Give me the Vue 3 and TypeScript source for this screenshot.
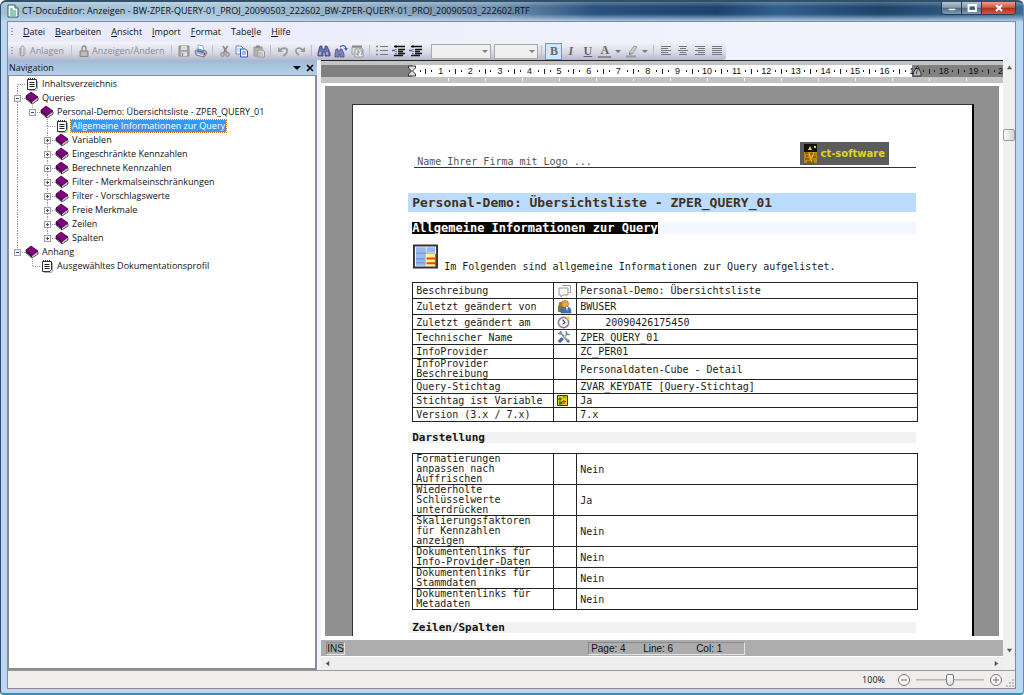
<script setup lang="ts">
import { ref } from 'vue'

type Kind = 'book' | 'page'
interface Row {
  label: string
  kind: Kind
  cells: string[]
  selected?: boolean
}

// Guide cells: t = line up, b = line down, r = line right, + / - = expander
const rows: Row[] = [
  { label: 'Inhaltsverzeichnis', kind: 'page', cells: ['br'] },
  { label: 'Queries', kind: 'book', cells: ['tbr-'] },
  { label: 'Personal-Demo: Übersichtsliste - ZPER_QUERY_01', kind: 'book', cells: ['tb', 'tr-'] },
  { label: 'Allgemeine Informationen zur Query', kind: 'page', cells: ['tb', '', 'tbr'], selected: true },
  { label: 'Variablen', kind: 'book', cells: ['tb', '', 'tbr+'] },
  { label: 'Eingeschränkte Kennzahlen', kind: 'book', cells: ['tb', '', 'tbr+'] },
  { label: 'Berechnete Kennzahlen', kind: 'book', cells: ['tb', '', 'tbr+'] },
  { label: 'Filter - Merkmalseinschränkungen', kind: 'book', cells: ['tb', '', 'tbr+'] },
  { label: 'Filter - Vorschlagswerte', kind: 'book', cells: ['tb', '', 'tbr+'] },
  { label: 'Freie Merkmale', kind: 'book', cells: ['tb', '', 'tbr+'] },
  { label: 'Zeilen', kind: 'book', cells: ['tb', '', 'tbr+'] },
  { label: 'Spalten', kind: 'book', cells: ['tb', '', 'tr+'] },
  { label: 'Anhang', kind: 'book', cells: ['tr-'] },
  { label: 'Ausgewähltes Dokumentationsprofil', kind: 'page', cells: ['', 'tr'] },
]

const menus = [
  ['', 'D', 'atei'],
  ['', 'B', 'earbeiten'],
  ['', 'A', 'nsicht'],
  ['', 'I', 'mport'],
  ['', 'F', 'ormat'],
  ['Tabe', 'l', 'le'],
  ['', 'H', 'ilfe'],
]

const info = [
  { name: 'Beschreibung', icon: 'note', value: 'Personal-Demo: Übersichtsliste' },
  { name: 'Zuletzt geändert von', icon: 'users', value: 'BWUSER' },
  { name: 'Zuletzt geändert am', icon: 'clock', value: '20090426175450', indent: true },
  { name: 'Technischer Name', icon: 'tools', value: 'ZPER_QUERY_01' },
  { name: 'InfoProvider', icon: '', value: 'ZC_PER01' },
  { name: 'InfoProvider Beschreibung', icon: '', value: 'Personaldaten-Cube - Detail', multi: true },
  { name: 'Query-Stichtag', icon: '', value: 'ZVAR_KEYDATE [Query-Stichtag]' },
  { name: 'Stichtag ist Variable', icon: 'variable', value: 'Ja' },
  { name: 'Version (3.x / 7.x)', icon: '', value: '7.x' },
]

const display = [
  { name: 'Formatierungen anpassen nach Auffrischen', value: 'Nein' },
  { name: 'Wiederholte Schlüsselwerte unterdrücken', value: 'Ja' },
  { name: 'Skalierungsfaktoren für Kennzahlen anzeigen', value: 'Nein' },
  { name: 'Dokumentenlinks für Info-Provider-Daten', value: 'Nein' },
  { name: 'Dokumentenlinks für Stammdaten', value: 'Nein' },
  { name: 'Dokumentenlinks für Metadaten', value: 'Nein' },
]

const zoom = ref(50)
</script>

<template>
  <div class="window">
    <header class="titlebar">
      <svg class="app-icon" viewBox="0 0 12 14"><path d="M1 1h7l3 3v9H1z" fill="#fff" stroke="#24605c" /><path d="M8 1v3h3" fill="#cde" stroke="#24605c" /><path d="M3 5h3M3 7h6M3 9h6M3 11h6" stroke="#2f8a80" /></svg>
      <h1>CT-DocuEditor: Anzeigen - BW-ZPER-QUERY-01_PROJ_20090503_222602_BW-ZPER-QUERY-01_PROJ_20090503_222602.RTF</h1>
      <div class="winbtns">
        <button type="button" aria-label="Minimieren"><svg viewBox="0 0 12 10"><path d="M2.500 5.500h7v2h-7z" fill="#fff" stroke="#566" stroke-width=".5" /></svg></button>
        <button type="button" aria-label="Maximieren"><svg viewBox="0 0 12 10"><path d="M2.500 2h7.500v6H2.500z" fill="none" stroke="#fff" stroke-width="1.800" /><path d="M4.500 4h3.500v2H4.500z" fill="#357" /></svg></button>
        <button type="button" class="close" aria-label="Schließen"><svg viewBox="0 0 12 10"><path d="M3 2l6 6M9 2l-6 6" stroke="#fff" stroke-width="2.200" /></svg></button>
      </div>
    </header>

    <div class="client">
      <nav class="menubar">
        <span class="grip"></span>
        <button v-for="m in menus" :key="m.join('')" type="button">{{ m[0] }}<u>{{ m[1] }}</u>{{ m[2] }}</button>
      </nav>

      <div class="toolbar">
        <span class="grip"></span>
        <button type="button" class="wide"><svg class="narrow" viewBox="0 0 10 14"><path d="M3 4v6a2 2 0 0 0 4 0V3.500a1.500 1.500 0 0 0-3 0V10" fill="none" stroke="#999" /><path d="M8 4v7" stroke="#bbb" /></svg>Anlagen</button>
        <i class="sep"></i>
        <button type="button" class="wide"><svg class="narrow" viewBox="0 0 10 14"><path d="M3 7V4.500a2 2.500 0 0 1 4 0V7" fill="none" stroke="#888" stroke-width="1.300" /><path d="M1 7h8v5.500H1z" fill="#aaa" stroke="#888" /><path d="M2 9h6M2 11h6" stroke="#ccc" /></svg>Anzeigen/Ändern</button>
        <i class="sep"></i>
        <button type="button" aria-label="Speichern"><svg viewBox="0 0 14 14"><path d="M2 2h10v10H2z" fill="#a5a5a5" stroke="#8b8b8b" /><path d="M4 2h6v4H4zM4 8h6v4H4z" fill="#ddd" /><path d="M5.500 9v3" stroke="#777" /></svg></button>
        <button type="button" aria-label="Drucken"><svg viewBox="0 0 14 14"><path d="M4 1l5 1 1 5H4z" fill="#fff" stroke="#7b8fb5" stroke-width=".7" /><path d="M1 7l3-2 8 2 1 2-3 4-8-2z" fill="#a9aebc" stroke="#666f85" stroke-width=".8" /><path d="M4 6l6 1.500-1 1.500-6-1.500z" fill="#3b74cf" /><path d="M3 10l6 1.500" stroke="#eee" /><circle cx="10.500" cy="10" r=".9" fill="#d33" /></svg></button>
        <i class="sep"></i>
        <button type="button" aria-label="Ausschneiden"><svg viewBox="0 0 14 14"><path d="M5 2l4 7M9.500 2l-4 7" stroke="#888" stroke-width="1.600" /><circle cx="4.500" cy="10.500" r="1.700" fill="none" stroke="#999" stroke-width="1.500" /><circle cx="9.500" cy="10.500" r="1.700" fill="none" stroke="#999" stroke-width="1.500" /></svg></button>
        <button type="button" aria-label="Kopieren"><svg viewBox="0 0 14 14"><path d="M1 2h5l2 2v6H1z" fill="#fff" stroke="#6685cf" /><path d="M2 5h4M2 7h4" stroke="#98b0e8" /><path d="M5.500 5h5l2 2v6h-7z" fill="#eef3ff" stroke="#3559b8" /><path d="M7 8h4M7 10h4" stroke="#5b80dd" /></svg></button>
        <button type="button" aria-label="Einfügen"><svg viewBox="0 0 14 14"><path d="M2 3h8v9H2z" fill="#b3b3b3" stroke="#929292" /><path d="M4 1.500h4v2H4z" fill="#8c8c8c" /><path d="M6 6h5l1.500 1.500V13H6z" fill="#ddd" stroke="#999" /><path d="M7 9h4M7 11h4" stroke="#aaa" /></svg></button>
        <i class="sep"></i>
        <button type="button" aria-label="Rückgängig"><svg viewBox="0 0 14 14"><path d="M4 6c3-3 8-2 7 1 0 2-2 4-4 5" fill="none" stroke="#999" stroke-width="1.800" /><path d="M2 3v5h5z" fill="#999" /></svg></button>
        <button type="button" aria-label="Wiederholen"><svg viewBox="0 0 14 14"><path d="M10 6C7 3 2 4 3 7c0 2 1 3 3 4" fill="none" stroke="#999" stroke-width="1.600" /><path d="M12 3v5H7z" fill="#999" /></svg></button>
        <i class="sep"></i>
        <button type="button" aria-label="Suchen"><svg viewBox="0 0 14 14"><path d="M3 2h2v3h3V2h2l3 7v3H8V8H6v4H1V9z" fill="#6b73ac" stroke="#363d79" stroke-width=".8" /><path d="M3 8v3M10 8v3" stroke="#dde" /></svg></button>
        <button type="button" aria-label="Ersetzen"><svg viewBox="0 0 14 14"><path d="M2 5h2v2h2V5h2l2 5v3H6v-3H5v3H1v-3z" fill="#7f85b4" stroke="#41477f" stroke-width=".7" /><path d="M6 3c2-2 5-2 6 1" fill="none" stroke="#3069d8" stroke-width="1.300" /><path d="M10 4h4l-2 3z" fill="#3069d8" /></svg></button>
        <button type="button" aria-label="Gehe zu"><svg viewBox="0 0 14 14"><path d="M1 3h9v7H1z" fill="#e0e0e0" stroke="#999" /><path d="M1 2.500h10" stroke="#888" stroke-width="2" /><path d="M4 5h8v8H4z" fill="#ececec" stroke="#999" /><path d="M6 7h2v2H6v2h2M9.500 7h2l-1 4" fill="none" stroke="#888" /></svg></button>
        <i class="sep"></i>
        <button type="button" aria-label="Aufzählung"><svg viewBox="0 0 14 14"><path d="M5 2.500h8M5 6.500h8M5 10.500h8" stroke="#777" /><path d="M1 2.500h2M1 6.500h2M1 10.500h2" stroke="#888" stroke-width="1.500" /></svg></button>
        <button type="button" aria-label="Einzug vergrößern"><svg viewBox="0 0 14 14"><path d="M2 2.500h11M6 5.500h7M6 7.500h5M2 11.500h9M6 9.500h7" stroke="#111" stroke-width="1.300" /><path d="M4 1v12" stroke="#222" stroke-dasharray="1 1" /><path d="M0 6.500h3" stroke="#3a55c5" stroke-width="1.500" /></svg></button>
        <button type="button" aria-label="Einzug verkleinern"><svg viewBox="0 0 14 14"><path d="M2 2.500h11M6 5.500h7M6 7.500h5M2 11.500h9M6 9.500h7" stroke="#111" stroke-width="1.300" /><path d="M4 1v12" stroke="#222" stroke-dasharray="1 1" /><path d="M0 6.500h3" stroke="#3a55c5" stroke-width="1.500" /></svg></button>
        <i class="sep blank"></i>
        <span class="combo font"><select aria-label="Schriftart"><option></option></select></span>
        <span class="combo size"><select aria-label="Schriftgröße"><option></option></select></span>
        <i class="sep"></i>
        <button type="button" class="letter active"><b>B</b></button>
        <button type="button" class="letter"><em>I</em></button>
        <button type="button" class="letter"><u>U</u></button>
        <button type="button" class="letter color">A</button>
        <button type="button" class="drop" aria-label="Schriftfarbe wählen"></button>
        <button type="button" aria-label="Hervorheben"><svg viewBox="0 0 14 14"><path d="M4 9l5-7 3 1-5 7z" fill="#ccc" stroke="#999" /><path d="M4 9l3 1-3 1z" fill="#777" /><path d="M1 12.500h10" stroke="#999" stroke-width="2" /></svg></button>
        <button type="button" class="drop" aria-label="Hervorhebungsfarbe wählen"></button>
        <i class="sep"></i>
        <button type="button" aria-label="Linksbündig"><svg viewBox="0 0 14 14"><path d="M2 2.500h10M2 4.500h7M2 6.500h10M2 8.500h7M2 10.500h10" stroke="#777" /></svg></button>
        <button type="button" aria-label="Zentriert"><svg viewBox="0 0 14 14"><path d="M3 2.500h8M4 4.500h6M2 6.500h10M4 8.500h6M3 10.500h8" stroke="#777" /></svg></button>
        <button type="button" aria-label="Rechtsbündig"><svg viewBox="0 0 14 14"><path d="M2 2.500h10M5 4.500h7M2 6.500h10M5 8.500h7M2 10.500h10" stroke="#777" /></svg></button>
        <button type="button" aria-label="Blocksatz"><svg viewBox="0 0 14 14"><path d="M2 2.500h10M2 4.500h10M2 6.500h10M2 8.500h10M2 10.500h10" stroke="#777" /></svg></button>
      </div>

      <div class="main">
        <aside class="nav">
          <div class="nav-head">
            <h2>Navigation</h2>
            <button type="button" aria-label="Optionen"><svg viewBox="0 0 12 12"><path d="M2 4h8l-4 4z" /></svg></button>
            <button type="button" aria-label="Navigation schließen"><svg viewBox="0 0 12 12"><path d="M3 3l6 6M9 3l-6 6" stroke="#000" stroke-width="1.600" /></svg></button>
          </div>
          <ul class="tree">
            <li v-for="r in rows" :key="r.label">
              <svg v-for="(c, i) in r.cells" :key="i" class="guide" viewBox="0 0 15 14">
                <g stroke="#9a9a9a" stroke-dasharray="1 1">
                  <path v-if="c.includes('t')" d="M7.500 0v7" />
                  <path v-if="c.includes('b')" d="M7.500 7v7" />
                  <path v-if="c.includes('r')" d="M8 7.500h7" />
                </g>
                <g v-if="/[+-]/.test(c)">
                  <rect x="4.500" y="4.500" width="6" height="6" fill="#f4f4f4" stroke="#a0a0a0" />
                  <path d="M6 7.500h3" stroke="#3a4f9c" />
                  <path v-if="c.includes('+')" d="M7.500 6v3" stroke="#3a4f9c" />
                </g>
              </svg>
              <svg v-if="r.kind === 'book'" class="node" viewBox="0 0 14 14">
                <path d="M1 5v3l6 5 6-4V7z" fill="#fff" stroke="#222" stroke-width=".8" />
                <path d="M7 11l6-4M7 12l6-4" stroke="#888" stroke-width=".6" />
                <path d="M1 5v2.500l6 5V10z" fill="#4d004d" />
                <path d="M1 5l5-4 7 5-6 4.500z" fill="#800080" stroke="#3d003d" stroke-width=".8" />
              </svg>
              <svg v-else class="node" viewBox="0 0 14 14">
                <path d="M2.500 2.500h9v8l-1.500 2H2.500z" fill="#fff" stroke="#333" />
                <path d="M3.500 1v2M5.500 1v2M7.500 1v2M9.500 1v2" stroke="#333" />
                <path d="M4.500 5.500h5M4.500 7.500h5M4.500 9.500h5" stroke="#222" />
                <path d="M12.500 4v8l-1 1.500H4" fill="none" stroke="#888" stroke-width=".7" />
              </svg>
              <a href="#" :class="{ selected: r.selected }">{{ r.label }}</a>
            </li>
          </ul>
        </aside>

        <section class="editor">
          <div class="workspace">
            <div class="ruler">
              <div class="scale">
                <svg class="tab" viewBox="0 0 10 12"><path d="M1.500 1h7v2L5.500 6l3 3v2h-7V9l3-3-3-3z" fill="#ddd" stroke="#333" /></svg>
                <div class="units">
                  <div v-for="n in 20" :key="n"><i></i><i class="half"></i><i></i><span>{{ n }}</span></div>
                </div>
                <div class="margin-zone"><svg viewBox="0 0 10 12"><path d="M5.500 1L9 8v3H1V8z" fill="#bbb" stroke="#333" /></svg></div>
              </div>
              <div class="stops"></div>
            </div>
            <div class="canvas">
              <article class="page">
                <header class="letterhead">
                  <p>Name Ihrer Firma mit Logo ...</p>
                  <div class="logo">
                    <svg viewBox="0 0 13 19"><path d="M0 0h13v19H0z" fill="#111" /><path d="M0 8h13v11H0z" fill="#b98912" /><path d="M4 6l2-4 2 4zM10 2h2v2h-2z" fill="#e5da2a" /><path d="M1 9h3M6 10h5M2 12h2M8 13h4M1 15h4M7 16h2M3 18h7" stroke="#5d3a08" /><path d="M5 9l3 9M10 8l-2 6" stroke="#efc12f" /></svg>
                    <span>ct-software</span>
                  </div>
                </header>
                <h2 class="title">Personal-Demo: Übersichtsliste - ZPER_QUERY_01</h2>
                <h3 class="subtitle"><mark>Allgemeine Informationen zur Query</mark></h3>
                <div class="intro">
                  <svg viewBox="0 0 26 25"><path d="M1 1h24v23H1z" fill="#fff" stroke="#333" stroke-width="2" /><path d="M3 3h9v19H3zM14 3h9v5h-9z" fill="#8fbcf5" /><path d="M3 9h20M3 15h9M3 19h9M12.500 3v19" stroke="#7986bb" /><path d="M14 10h9v12h-9z" fill="#fff27d" /><path d="M14 14.500h9M14 19.500h9" stroke="#ff3d16" stroke-width="2" /><path d="M23.500 10v13" stroke="#7a5418" /></svg>
                  <p>Im Folgenden sind allgemeine Informationen zur Query aufgelistet.</p>
                </div>
                <table>
                  <colgroup><col class="c1" /><col class="c2" /><col /></colgroup>
                  <tbody>
                    <tr v-for="r in info" :key="r.name">
                      <th scope="row" :class="{ multi: r.multi }">{{ r.name }}</th>
                      <td class="ic">
                        <svg v-if="r.icon === 'note'" class="big" viewBox="0 0 15 15"><path d="M5 2.500h8.500v7H12" fill="#fff" stroke="#999" /><path d="M2 5h9v7H6l-2 2v-2H2z" fill="#fafafa" stroke="#999" /></svg>
                        <svg v-else-if="r.icon === 'users'" class="big" viewBox="0 0 15 15"><path d="M1 7l2-3 4 2v7H1z" fill="#61883f" /><circle cx="4" cy="5" r="2.300" fill="#b27325" /><path d="M4 13c0-5 2-5 5-5s5 0 5 6H4z" fill="#496fad" stroke="#35558d" stroke-width=".6" /><circle cx="8" cy="5" r="3.500" fill="#e9a548" stroke="#a9651c" stroke-width=".7" /><path d="M9 8l1 4 1-4z" fill="#fff" /></svg>
                        <svg v-else-if="r.icon === 'clock'" viewBox="0 0 15 15"><circle cx="7" cy="8" r="5.500" fill="#fafafa" stroke="#8f7da6" stroke-width="1.700" /><path d="M6 5l2.500 3L6 10" fill="none" stroke="#333" stroke-width="1.200" /><path d="M12 0l1 2.500 2 .5-2 1-1 2-1-2-2-1 2-.5z" fill="#f4d638" /></svg>
                        <svg v-else-if="r.icon === 'tools'" viewBox="0 0 15 15"><path d="M3 2l8 9" stroke="#78909c" stroke-width="2" /><path d="M11 11l2 2" stroke="#5c7694" stroke-width="3" /><path d="M12 3L4 11" stroke="#a9b6c4" stroke-width="1.600" /><path d="M6 9l-4 4" stroke="#3d6aab" stroke-width="3.500" /><path d="M10 1v4h4M1 4h3V1" fill="none" stroke="#78909c" stroke-width="1.500" /></svg>
                        <svg v-else-if="r.icon === 'variable'" class="small" viewBox="0 0 11 11"><path d="M.5.5h10v10H.500z" fill="#e5cf17" stroke="#333" /><path d="M2 3h2v2H2zM6 2h3M2 7h3v2H2" fill="#4b6b13" stroke="#4b6b13" /><path d="M7 5v4M5 6.500h4" stroke="#c22" /></svg>
                      </td>
                      <td><span :class="{ indent: r.indent }">{{ r.value }}</span></td>
                    </tr>
                  </tbody>
                </table>
                <h4>Darstellung</h4>
                <table>
                  <colgroup><col class="c1" /><col class="c2" /><col /></colgroup>
                  <tbody>
                    <tr v-for="r in display" :key="r.name">
                      <th scope="row" class="multi">{{ r.name }}</th>
                      <td class="ic"></td>
                      <td>{{ r.value }}</td>
                    </tr>
                  </tbody>
                </table>
                <h4>Zeilen/Spalten</h4>
              </article>
            </div>
            <div class="infobar">
              <span class="ins">INS</span>
              <div class="pos"><span>Page: 4</span><span>Line: 6</span><span>Col: 1</span></div>
            </div>
            <div class="hscroll">
              <button type="button" aria-label="Nach links"><svg viewBox="0 0 8 8"><path d="M6 1v6L2 4z" /></svg></button>
              <button type="button" aria-label="Nach rechts"><svg viewBox="0 0 8 8"><path d="M2 1v6l4-3z" /></svg></button>
            </div>
          </div>
          <div class="vscroll">
            <button type="button" aria-label="Nach oben"><svg viewBox="0 0 8 8"><path d="M1 6h6L4 2z" /></svg></button>
            <div class="track"><span class="before"></span><span class="thumb"></span><span class="after"></span></div>
            <button type="button" aria-label="Nach unten"><svg viewBox="0 0 8 8"><path d="M1 2h6L4 6z" /></svg></button>
          </div>
        </section>
      </div>

      <footer class="status">
        <label for="zoom">100%</label>
        <button type="button" aria-label="Verkleinern"><svg viewBox="0 0 14 14"><circle cx="7" cy="7" r="5.500" fill="#f6f4f4" stroke="#777" /><path d="M4 7h6" stroke="#777" /></svg></button>
        <input id="zoom" v-model="zoom" type="range" min="0" max="100" />
        <button type="button" aria-label="Vergrößern"><svg viewBox="0 0 14 14"><circle cx="7" cy="7" r="5.500" fill="#f6f4f4" stroke="#777" /><path d="M4 7h6M7 4v6" stroke="#777" /></svg></button>
        <svg class="resize" viewBox="0 0 10 10"><path d="M7 1h2v2H7zM4 4h2v2H4zM7 4h2v2H7zM1 7h2v2H1zM4 7h2v2H4zM7 7h2v2H7z" fill="#c3bfbf" /></svg>
      </footer>
    </div>
  </div>
</template>

<style>
body { background: #fff; }
</style>

<style scoped>
* { box-sizing: border-box; }
h1, h2, h3, h4, p, ul { margin: 0; padding: 0; font-weight: normal; }
button { border: 0; padding: 0; margin: 0; background: none; font: inherit; color: inherit; }
svg { display: block; flex: none; }
a { color: inherit; text-decoration: none; }

.window {
  height: 100vh;
  display: flex;
  flex-direction: column;
  padding: 0 7px 4px 6px;
  border: 1px solid #31506a;
  border-top-width: 2px;
  border-right-color: #17a9cf;
  border-bottom: 2px solid #2f90b0;
  border-radius: 6px 6px 4px 4px;
  background:
    linear-gradient(180deg, rgba(255, 255, 255, .25) 0, rgba(255, 255, 255, 0) 5px, rgba(255, 255, 255, 0) 12px, #bdd7f3 20px) 0 0 / 100% 21px no-repeat,
    linear-gradient(90deg, #a3bfd5 0, #a9c6da 20%, #8eabc4 36%, #7594b2 48%, #29527d 58%, #1c436c 70%, #315f8b 76%, #1d4369 86%, #406b91 100%) 0 0 / 100% 21px no-repeat,
    #bdd7f3;
  font-family: "Open Sans", "Noto Sans", sans-serif;
  font-size: 9px;
  line-height: 12px;
  color: #111;
}
.titlebar { display: flex; height: 19px; align-items: flex-start; }
.app-icon { width: 12px; height: 14px; margin-top: 2px; }
.titlebar h1 { flex: 1; margin-left: 3px; font-size: 9px; line-height: 17px; white-space: nowrap; overflow: hidden; }
.winbtns { display: flex; border: 1px solid #263f58; border-top: 0; border-radius: 0 0 4px 4px; overflow: hidden; }
.winbtns button { width: 20px; height: 12px; display: grid; place-items: center; border-right: 1px solid #263f58; background: linear-gradient(#b5c3d1, #8498ab 45%, #506a83 50%, #7f9bb3); }
.winbtns button.close { width: 33px; border-right: 0; background: linear-gradient(#e3a18d, #cd5941 45%, #b62d12 50%, #d6593b); }
.winbtns svg { width: 12px; height: 10px; }

.client { flex: 1; min-height: 0; display: flex; flex-direction: column; border: 1px solid #838c96; background: #f0f3fd; }
.menubar { height: 20px; flex: none; display: flex; align-items: center; padding-left: 3px; gap: 10px; background: linear-gradient(90deg, #e9eafa, #f1f4fd 80%); }
.grip { width: 2px; height: 9px; flex: none; background: repeating-linear-gradient(#9a9aae 0 1px, transparent 1px 3px); }
.toolbar { height: 18px; flex: none; align-self: flex-start; display: flex; align-items: center; padding: 0 1px 0 3px; border-radius: 0 3px 3px 0; background: linear-gradient(#f4f4fb, #d8d8e6 60%, #b7b7cd); color: #8b8b8b; }
.toolbar button { width: 17px; height: 17px; flex: none; display: grid; place-items: center; }
.toolbar svg { width: 14px; height: 14px; }
.toolbar svg.narrow { width: 10px; }
.toolbar button.wide { width: auto; display: flex; align-items: center; gap: 3px; padding: 0 4px; }
.sep { width: 7px; height: 12px; flex: none; background: linear-gradient(#bcbccb, #bcbccb) 3px 0 / 1px 100% no-repeat; }
.sep.blank { background: none; }
.combo { height: 15px; flex: none; display: flex; position: relative; margin-right: 3px; }
.combo select { width: 100%; appearance: none; border: 1px solid #a9a9a9; border-radius: 0; background: #f0f0f0; font-size: 9px; padding: 0; }
.combo::after { content: ""; position: absolute; right: 3px; top: 6px; border: 3px solid transparent; border-top-color: #808080; border-bottom: 0; pointer-events: none; }
.combo.font { width: 60px; }
.combo.size { width: 44px; margin-right: 0; }
.toolbar button.letter { font-family: "Liberation Serif", serif; font-size: 12px; line-height: 13px; font-weight: bold; color: #666; }
.toolbar button.active { background: #cfe6fb; border: 1px solid #4aa3e8; }
.toolbar button.color { height: 13px; width: 13px; margin: 0 2px; line-height: 10px; border-bottom: 2px solid #8b8b8b; }
.toolbar button.drop { width: 10px; }
.drop::after { content: ""; border: 3px solid transparent; border-top-color: #777; border-bottom: 0; }

.main { flex: 1; min-height: 0; display: flex; gap: 4px; }
.nav { width: 30.7%; display: flex; flex-direction: column; }
.nav-head { height: 15px; flex: none; display: flex; align-items: center; gap: 1px; padding: 0 1px; background: linear-gradient(#9fb9d7, #b5d0ea); }
.nav-head h2 { flex: 1; font-size: 9px; line-height: 14px; }
.nav-head svg { width: 12px; height: 12px; }
.tree { flex: 1; list-style: none; padding: 1px; border: 1px solid #898c95; border-bottom-width: 2px; border-right-width: 2px; background: #fff; overflow: hidden; }
.tree li { display: flex; align-items: center; height: 14px; white-space: nowrap; }
.guide { width: 15px; height: 14px; }
.node { width: 14px; height: 14px; margin-right: 2px; }
.tree a { line-height: 12px; padding: 0 1px; }
.tree a.selected { background: #3399ff; color: #fff; outline: 1px dotted #c66a14; }

.editor { flex: 1; min-width: 0; display: flex; background: #fff; }
.workspace { flex: 1; min-width: 0; display: flex; flex-direction: column; border-top: 1px solid #222; }
.ruler { flex: none; background: #c3c3c3; padding-top: 4px; height: 22px; overflow: hidden; }
.scale { height: 12px; display: flex; position: relative; padding-left: 96px; background: linear-gradient(90deg, #808080 91px, #fff 91px); }
.tab { position: absolute; left: 86px; top: 0; width: 10px; height: 12px; z-index: 2; }
.margin-zone { position: absolute; right: 0; top: 0; width: 13.3%; height: 12px; background: #808080; }
.margin-zone svg { width: 10px; height: 12px; }
.units { flex: 1; min-width: 0; overflow: hidden; display: grid; grid-template-columns: repeat(20, 1fr); margin-right: -6px; font: 9px/12px "Liberation Sans", sans-serif; z-index: 1; }
.units div { display: grid; grid-template-columns: repeat(4, 1fr); place-items: center; }
.units span { width: 12px; text-align: center; }
.units i { width: 1px; height: 2px; background: #222; }
.units i.half { height: 5px; }
.workspace .ruler, .workspace .canvas { overflow: hidden; }
.stops { height: 3px; margin: 1px 0 0 91px; background: repeating-linear-gradient(90deg, transparent 0 36px, #f4f4f4 36px 37px); }
.canvas { flex: 1; min-height: 0; margin: 3px 4px 4px; padding: 18px 25px 0 27px; background: #909090; }
.page { min-height: 100%; padding: 36px 56px 0 55px; border: 1px solid #333; border-right: 2px solid #000; border-bottom: 0; background: #fff; font: 10px/12px "DejaVu Sans Mono", "Liberation Mono", monospace; color: #1b1b1b; }
.letterhead { display: flex; align-items: flex-end; justify-content: space-between; height: 27px; margin-left: 6px; border-bottom: 1px solid #333; color: #555; }
.letterhead p { padding-left: 3px; line-height: 10px; }
.logo { display: flex; align-items: center; gap: 3px; height: 23px; margin: 0 27px 2px 0; padding: 0 4px; background: #5c5c5c; color: #e0d61a; font: bold 10px/14px "DejaVu Sans", sans-serif; }
.logo svg { width: 13px; height: 19px; }
.title { margin-top: 25px; padding-left: 4px; background: #bbdcff; color: #42301c; font-size: 13px; line-height: 19px; font-weight: bold; }
.subtitle { display: flex; margin-top: 10px; padding-left: 4px; background: #f2f7ff; font-size: 12px; line-height: 12px; font-weight: bold; }
.subtitle mark { background: #0b0804; color: #fff; }
.intro { display: flex; align-items: flex-end; gap: 6px; margin: 10px 0 0 5px; }
.intro svg { width: 25px; height: 25px; margin-bottom: 3px; }
.intro p { line-height: 10px; }
table { width: calc(100% - 2px); margin: 10px 0 0 4px; border-collapse: collapse; table-layout: fixed; }
.c1 { width: 141px; }
.c2 { width: 23px; }
th, td { border: 1px solid #222; padding: 0 3px; text-align: left; font-weight: normal; line-height: 13px; vertical-align: middle; }
th.multi { line-height: 10px; }
td.ic { padding: 0; }
td.ic svg { width: 14px; height: 14px; margin: 0 auto 0 3px; }
td.ic svg.big { width: 15px; height: 15px; }
td.ic svg.small { width: 11px; height: 11px; }
.indent { padding-left: 25px; }
h4 { margin-top: 10px; padding-left: 4px; background: #f2f2f2; font-size: 11px; line-height: 11px; font-weight: bold; color: #111; }
h4 + table + h4 { margin-top: 12px; }

.infobar { height: 16px; flex: none; display: flex; align-items: center; padding-left: 5px; background: #adadad; font: 10px/12px "Liberation Sans", sans-serif; }
.ins, .pos { height: 13px; border: 1px solid; border-color: #888 #e4e4e4 #e4e4e4 #888; }
.ins { width: 19px; }
.pos { display: grid; grid-template-columns: 52px 53px 49px; width: 157px; margin-left: 243px; padding-left: 2px; }
.hscroll { height: 14px; flex: none; display: flex; align-items: center; justify-content: space-between; padding: 0 3px; background: #eee; border-top: 1px solid #fff; }
.hscroll svg, .vscroll svg { width: 7px; height: 7px; fill: #555; }
.vscroll { width: 12px; flex: none; display: flex; flex-direction: column; align-items: center; padding: 4px 0 16px; background: #f0f0f0; }
.track { flex: 1; display: flex; flex-direction: column; }
.before { flex: 58; }
.after { flex: 504; }
.thumb { width: 12px; height: 12px; border: 1px solid #999; border-radius: 2px; background: linear-gradient(90deg, #fafafa, #d3d3d3); }

.status { height: 18px; flex: none; display: flex; align-items: center; justify-content: flex-end; border-top: 1px solid #999; background: #f0eded; }
.status label { margin-right: 12px; }
.status button svg { width: 14px; height: 14px; }
.status input { width: 68px; height: 14px; margin: 0 5px; appearance: none; background: linear-gradient(#aaa, #ddd) 0 6px / 100% 2px no-repeat; }
.status input::-webkit-slider-thumb { appearance: none; width: 8px; height: 12px; border: 1px solid #777; border-radius: 2px 2px 4px 4px; background: linear-gradient(#fff, #ddd); }
.resize { width: 10px; height: 10px; align-self: flex-end; margin-left: 2px; }
</style>
